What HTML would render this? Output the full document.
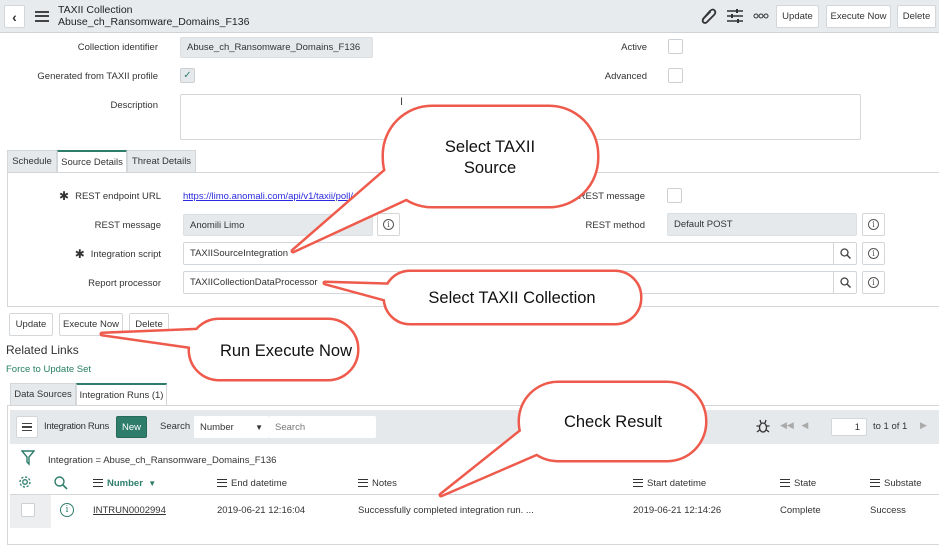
<!DOCTYPE html>
<html><head><meta charset="utf-8"><style>
*{box-sizing:border-box;margin:0;padding:0}
body{width:939px;height:541px;overflow:hidden;background:#fff;font-family:"Liberation Sans",sans-serif;font-size:9.5px;color:#333;position:relative}
.a{position:absolute;white-space:nowrap}
.r{text-align:right}
.in{position:absolute;border:1px solid #d4d7da;border-radius:2px;background:#fff;padding:0 6px;display:flex;align-items:center;font-size:9.5px;color:#333}
.ro{background:#e6e9ec;border-color:#dcdfe2}
.cb{position:absolute;width:15px;height:15px;border:1px solid #cdd0d3;border-radius:2px;background:#fff}
.btn{position:absolute;border:1px solid #d4d7da;border-radius:2px;background:#fff;display:flex;align-items:center;justify-content:center;font-size:9.5px;color:#333}
.ib{position:absolute;width:23px;height:23px;border:1px solid #d4d7da;border-radius:2px;background:#fff;display:flex;align-items:center;justify-content:center}
.ic{width:11px;height:11px;border:1px solid #555;border-radius:50%;font-size:8px;line-height:9px;text-align:center;font-family:"DejaVu Serif",serif;color:#555}
.sb{position:absolute;width:24px;display:flex;align-items:center;justify-content:center;border-left:1px solid #d4d7da}
.ham{display:inline-block;width:11px;height:9px;border-top:2px solid #444;border-bottom:2px solid #444;position:relative}
.ham:after{content:"";position:absolute;left:0;right:0;top:1.5px;border-top:2px solid #444}
.hs{display:inline-block;width:10px;height:8px;border-top:1.5px solid #333;border-bottom:1.5px solid #333;position:relative;margin-right:4px;vertical-align:-1px}
.hs:after{content:"";position:absolute;left:0;right:0;top:1.75px;border-top:1.5px solid #333}
.tab{position:absolute;border:1px solid #d4d7da;background:#e6e9ec;display:flex;align-items:center;justify-content:center;font-size:9.5px}
.tab.on{background:#fff;border-top:2px solid #2e7d6b;border-bottom-color:#fff}
.ast{display:inline-block;height:10px;line-height:10px;font-size:12px;margin-right:6px;vertical-align:-1px}
</style></head><body>
<!-- header -->
<div class="a" style="left:0;top:0;width:939px;height:33px;background:#e8ebee;border-bottom:1px solid #d0d3d6"></div>
<div class="btn" style="left:4px;top:5px;width:21px;height:23px;font-size:14px;font-weight:bold">‹</div>
<div class="a" style="left:35px;top:11px"><span class="ham" style="width:14px;height:11px"></span></div>
<div class="a" style="left:58px;top:4px;font-size:10.5px;line-height:12px;color:#222">TAXII Collection<br>Abuse_ch_Ransomware_Domains_F136</div>
<svg class="a" style="left:699px;top:7px" width="18" height="18"><path d="M4 12 L11 4 Q14 1 16 4 Q17 6 15 8 L8 15 Q6 17 4 15 Q3 13 5 11 L11 5" fill="none" stroke="#333" stroke-width="1.8" stroke-linecap="round"/></svg>
<svg class="a" style="left:726px;top:8px" width="18" height="16"><g stroke="#333" stroke-width="1.5"><line x1="1" y1="3" x2="17" y2="3"/><line x1="1" y1="8" x2="17" y2="8"/><line x1="1" y1="13" x2="17" y2="13"/></g><g fill="#333"><rect x="10" y="1" width="2" height="4"/><rect x="5" y="6" width="2" height="4"/><rect x="11" y="11" width="2" height="4"/></g></svg>
<svg class="a" style="left:753px;top:13px" width="16" height="6"><g fill="none" stroke="#333" stroke-width="1"><circle cx="3" cy="3" r="2"/><circle cx="8" cy="3" r="2"/><circle cx="13" cy="3" r="2"/></g></svg>
<div class="btn" style="left:776px;top:5px;width:43px;height:23px">Update</div>
<div class="btn" style="left:826px;top:5px;width:65px;height:23px">Execute Now</div>
<div class="btn" style="left:897px;top:5px;width:39px;height:23px">Delete</div>
<!-- top fields -->
<div class="a r" style="left:0;width:158px;top:42px">Collection identifier</div>
<div class="in ro" style="left:180px;top:37px;width:193px;height:21px">Abuse_ch_Ransomware_Domains_F136</div>
<div class="a r" style="left:0;width:158px;top:71px">Generated from TAXII profile</div>
<div class="cb" style="left:180px;top:68px;background:#e6e9ec;color:#2e7d6b;font-size:10px;text-align:center;line-height:13px">✓</div>
<div class="a r" style="left:0;width:158px;top:100px">Description</div>
<div class="in" style="left:180px;top:94px;width:681px;height:46px"></div>
<div class="a" style="left:400px;top:96px;font-size:11px;color:#444">I</div>
<div class="a r" style="left:500px;width:147px;top:42px">Active</div>
<div class="cb" style="left:668px;top:39px"></div>
<div class="a r" style="left:500px;width:147px;top:71px">Advanced</div>
<div class="cb" style="left:668px;top:68px"></div>
<!-- tabs -->
<div class="tab" style="left:7px;top:150px;width:50px;height:23px">Schedule</div>
<div class="tab on" style="left:57px;top:150px;width:70px;height:23px">Source Details</div>
<div class="tab" style="left:127px;top:150px;width:69px;height:23px">Threat Details</div>
<div class="a" style="left:7px;top:172px;width:940px;height:135px;border:1px solid #d4d7da"></div>
<div class="a r" style="left:0;width:161px;top:191px"><span class="ast">✱</span>REST endpoint URL</div>
<div class="a" style="left:183px;top:191px;color:#2a2ae0;text-decoration:underline">https://limo.anomali.com/api/v1/taxii/poll/</div>
<div class="a r" style="left:500px;width:145px;top:191px">Use REST message</div>
<div class="cb" style="left:667px;top:188px"></div>
<div class="a r" style="left:0;width:161px;top:220px">REST message</div>
<div class="in ro" style="left:183px;top:214px;width:190px;height:22px">Anomili Limo</div>
<div class="ib" style="left:377px;top:213px"><div class="ic">i</div></div>
<div class="a r" style="left:500px;width:145px;top:220px">REST method</div>
<div class="in ro" style="left:667px;top:213px;width:190px;height:23px">Default POST</div>
<div class="ib" style="left:862px;top:213px"><div class="ic">i</div></div>
<div class="a r" style="left:0;width:161px;top:249px"><span class="ast">✱</span>Integration script</div>
<div class="in" style="left:183px;top:242px;width:674px;height:23px">TAXIISourceIntegration</div>
<div class="sb" style="left:833px;top:243px;height:21px"><svg width="11" height="11"><circle cx="4.5" cy="4.5" r="3.5" fill="none" stroke="#444" stroke-width="1.3"/><line x1="7" y1="7" x2="10.5" y2="10.5" stroke="#444" stroke-width="1.5"/></svg></div>
<div class="ib" style="left:862px;top:242px"><div class="ic">i</div></div>
<div class="a r" style="left:0;width:161px;top:278px">Report processor</div>
<div class="in" style="left:183px;top:271px;width:674px;height:23px">TAXIICollectionDataProcessor</div>
<div class="sb" style="left:833px;top:272px;height:21px"><svg width="11" height="11"><circle cx="4.5" cy="4.5" r="3.5" fill="none" stroke="#444" stroke-width="1.3"/><line x1="7" y1="7" x2="10.5" y2="10.5" stroke="#444" stroke-width="1.5"/></svg></div>
<div class="ib" style="left:862px;top:271px"><div class="ic">i</div></div>
<!-- buttons -->
<div class="btn" style="left:9px;top:313px;width:44px;height:23px">Update</div>
<div class="btn" style="left:59px;top:313px;width:64px;height:23px">Execute Now</div>
<div class="btn" style="left:129px;top:313px;width:40px;height:23px">Delete</div>
<div class="a" style="left:6px;top:343px;font-size:12px;color:#333">Related Links</div>
<div class="a" style="left:6px;top:364px;color:#278061">Force to Update Set</div>
<!-- related tabs -->
<div class="tab" style="left:10px;top:383px;width:66px;height:23px">Data Sources</div>
<div class="tab on" style="left:76px;top:383px;width:91px;height:23px">Integration Runs (1)</div>
<div class="a" style="left:7px;top:405px;width:940px;height:140px;border:1px solid #d4d7da;border-right:none"></div>
<div class="a" style="left:10px;top:410px;width:929px;height:34px;background:#e6e9ec"></div>
<div class="btn" style="left:16px;top:416px;width:22px;height:22px"><span class="ham" style="width:10px;height:8px;border-width:1.5px"></span></div>
<div class="a" style="left:44px;top:421px;font-size:9.5px;letter-spacing:-0.3px">Integration Runs</div>
<div class="btn" style="left:116px;top:416px;width:31px;height:22px;background:#2e7d6b;border-color:#25695a;color:#fff">New</div>
<div class="a" style="left:160px;top:421px;font-size:9.5px">Search</div>
<div class="in" style="left:194px;top:416px;width:75px;height:22px;border:none">Number<span style="margin-left:auto;font-size:8px">▼</span></div>
<div class="in" style="left:269px;top:416px;width:107px;height:22px;border:none;color:#777">Search</div>
<svg class="a" style="left:756px;top:419px" width="14" height="15"><g fill="none" stroke="#333" stroke-width="1.3"><ellipse cx="7" cy="8.5" rx="3.5" ry="4.5"/><path d="M5 4 L4 1 M9 4 L10 1 M3.5 7 H0.5 M10.5 7 H13.5 M3.5 11 L1 13 M10.5 11 L13 13"/></g></svg>
<div class="a" style="left:780px;top:420px;font-size:9px;color:#aaa">◀◀ &nbsp; ◀</div>
<div class="in" style="left:831px;top:418px;width:36px;height:18px;justify-content:flex-end">1</div>
<div class="a" style="left:873px;top:421px">to 1 of 1</div>
<div class="a" style="left:920px;top:420px;font-size:9px;color:#aaa">▶</div>
<svg class="a" style="left:21px;top:450px" width="14" height="16"><path d="M1 1h12l-5 6v7l-2-2v-5z" fill="none" stroke="#2e7d6b" stroke-width="1.4"/></svg>
<div class="a" style="left:48px;top:455px">Integration = Abuse_ch_Ransomware_Domains_F136</div>
<svg class="a" style="left:18px;top:475px" width="14" height="14"><circle cx="7" cy="7" r="2.3" fill="none" stroke="#2e7d6b" stroke-width="1.3"/><circle cx="7" cy="7" r="5" fill="none" stroke="#2e7d6b" stroke-width="1.3" stroke-dasharray="2.2 1.7"/></svg>
<svg class="a" style="left:54px;top:476px" width="14" height="14"><circle cx="5.5" cy="5.5" r="4.5" fill="none" stroke="#2e7d6b" stroke-width="1.4"/><line x1="9" y1="9" x2="13" y2="13" stroke="#2e7d6b" stroke-width="1.6"/></svg>
<div class="a" style="left:93px;top:478px;color:#2e7d6b;font-weight:bold"><span class="hs"></span>Number &nbsp;<span style="font-size:8px">▼</span></div>
<div class="a" style="left:217px;top:478px"><span class="hs"></span>End datetime</div>
<div class="a" style="left:358px;top:478px"><span class="hs"></span>Notes</div>
<div class="a" style="left:633px;top:478px"><span class="hs"></span>Start datetime</div>
<div class="a" style="left:780px;top:478px"><span class="hs"></span>State</div>
<div class="a" style="left:870px;top:478px"><span class="hs"></span>Substate</div>
<div class="a" style="left:10px;top:494px;width:929px;border-top:1px solid #d4d7da"></div>
<div class="a" style="left:10px;top:495px;width:41px;height:33px;background:#eceef0"></div>
<div class="cb" style="left:21px;top:503px;width:14px;height:14px"></div>
<div class="a" style="left:60px;top:503px;width:14px;height:14px;border:1.3px solid #2e7d6b;border-radius:50%;color:#2e7d6b;font-size:9px;text-align:center;line-height:12px;font-family:'DejaVu Serif',serif">i</div>
<div class="a" style="left:93px;top:505px;text-decoration:underline">INTRUN0002994</div>
<div class="a" style="left:217px;top:505px">2019-06-21 12:16:04</div>
<div class="a" style="left:358px;top:505px">Successfully completed integration run. ...</div>
<div class="a" style="left:633px;top:505px">2019-06-21 12:14:26</div>
<div class="a" style="left:780px;top:505px">Complete</div>
<div class="a" style="left:870px;top:505px">Success</div>
<!-- callouts -->
<svg class="a" style="left:0;top:0" width="939" height="541">
<defs>
<g id="sh">
<polygon points="392,165 293,251 412,196"/>
<rect x="384" y="107" width="213" height="99" rx="48"/>
<polygon points="395,285 325,283 395,302"/>
<rect x="385" y="272" width="255" height="51" rx="25"/>
<polygon points="200,330 102,334 200,348"/>
<rect x="190" y="320" width="167" height="59" rx="29"/>
<polygon points="525,428 441,495 545,450"/>
<rect x="520" y="383" width="185" height="77" rx="38"/>
</g>
</defs>
<use href="#sh" fill="#fff" stroke="#ee5a4b" stroke-width="5" stroke-linejoin="round"/>
<use href="#sh" fill="#fff"/>
<g font-family="Liberation Sans,sans-serif" font-size="16.5" fill="#111" text-anchor="middle">
<text x="490" y="152">Select TAXII</text>
<text x="490" y="173">Source</text>
<text x="512" y="303">Select TAXII Collection</text>
<text x="286" y="356">Run Execute Now</text>
<text x="613" y="427">Check Result</text>
</g>
</svg>
</body></html>
